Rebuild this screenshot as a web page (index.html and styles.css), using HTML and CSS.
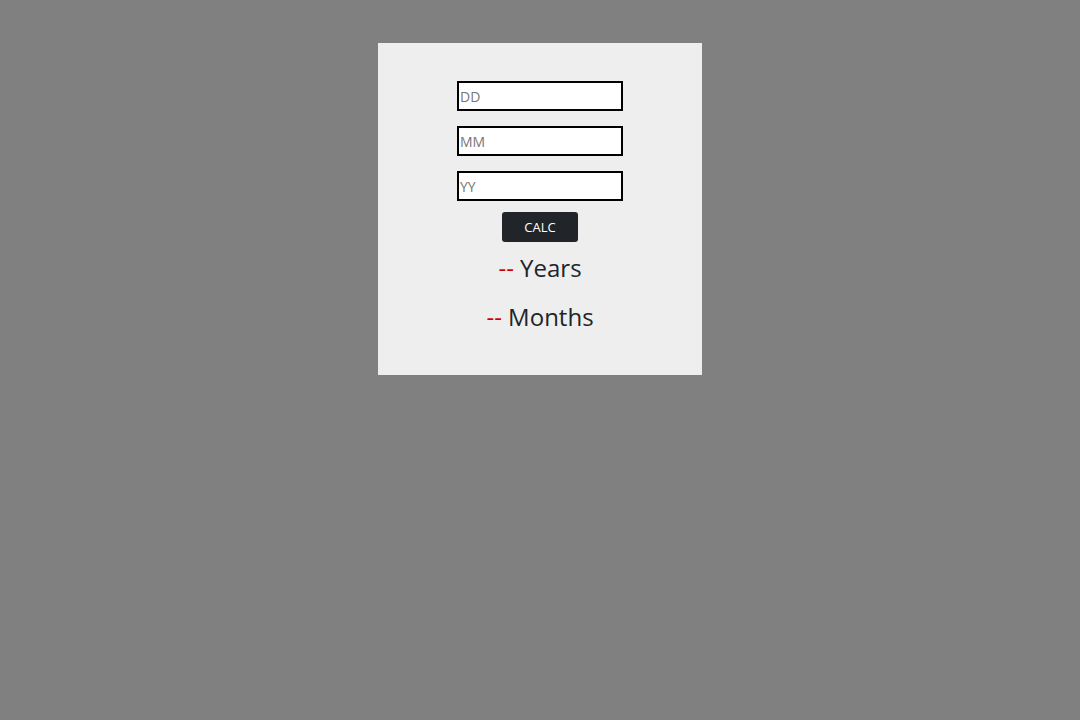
FILE: index.html
```html
<!DOCTYPE html>
<html lang="en">
<head>
    <meta charset="UTF-8">
    <meta name="viewport" content="width=device-width, initial-scale=1.0">
    <title>Age Calculator</title>
    <link rel="stylesheet" href="styles.css">
</head>
<body>
    <div class="calc-box">
        <input type="text" id="day" class="date-field" placeholder="DD">
        <input type="text" id="month" class="date-field" placeholder="MM">
        <input type="text" id="year" class="date-field" placeholder="YY">

        <button type="button" class="calc-btn" onclick="calcAge()">CALC</button>

        <p class="result"><span class="num" id="years">--</span> Years</p>
        <p class="result"><span class="num" id="months">--</span> Months</p>
    </div>

    <script>
        function calcAge() {
            const d = parseInt(document.getElementById('day').value);
            const m = parseInt(document.getElementById('month').value);
            const y = parseInt(document.getElementById('year').value);
            if (!d || !m || !y) return;

            const today = new Date();
            let years = today.getFullYear() - y;
            let months = today.getMonth() + 1 - m;
            if (today.getDate() < d) months--;
            if (months < 0) {
                years--;
                months += 12;
            }
            document.getElementById('years').textContent = years;
            document.getElementById('months').textContent = months;
        }
    </script>
</body>
</html>
```

FILE: styles.css
```css
body {
    margin: 0;
    padding-top: 43px;
    min-height: 100vh;
    box-sizing: border-box;
    background-color: #808080;
    font-family: "Open Sans", Arial, sans-serif;
}

.calc-box {
    width: 324px;
    margin: 0 auto;
    padding: 38px 0 40px;
    background-color: #eeeeee;
    display: flex;
    flex-direction: column;
    align-items: center;
}

.date-field {
    width: 166px;
    height: 30px;
    box-sizing: border-box;
    margin-bottom: 15px;
    padding: 1px 1px;
    border: 2px solid #000;
    background: #fff;
    font-family: "Open Sans", Arial, sans-serif;
    font-size: 14px;
    outline: none;
}

.date-field:last-of-type {
    margin-bottom: 11px;
}

.date-field::placeholder {
    color: #777;
}

.calc-btn {
    width: 76px;
    height: 30px;
    background-color: #212529;
    color: #fff;
    border: none;
    border-radius: 3px;
    font-family: "Open Sans", Arial, sans-serif;
    font-size: 13px;
    cursor: pointer;
}

.result {
    margin: 8px 0 0;
    font-size: 24px;
    line-height: 36px;
    color: #212529;
}

.result + .result {
    margin-top: 13px;
}

.num {
    color: #d00000;
}
```
